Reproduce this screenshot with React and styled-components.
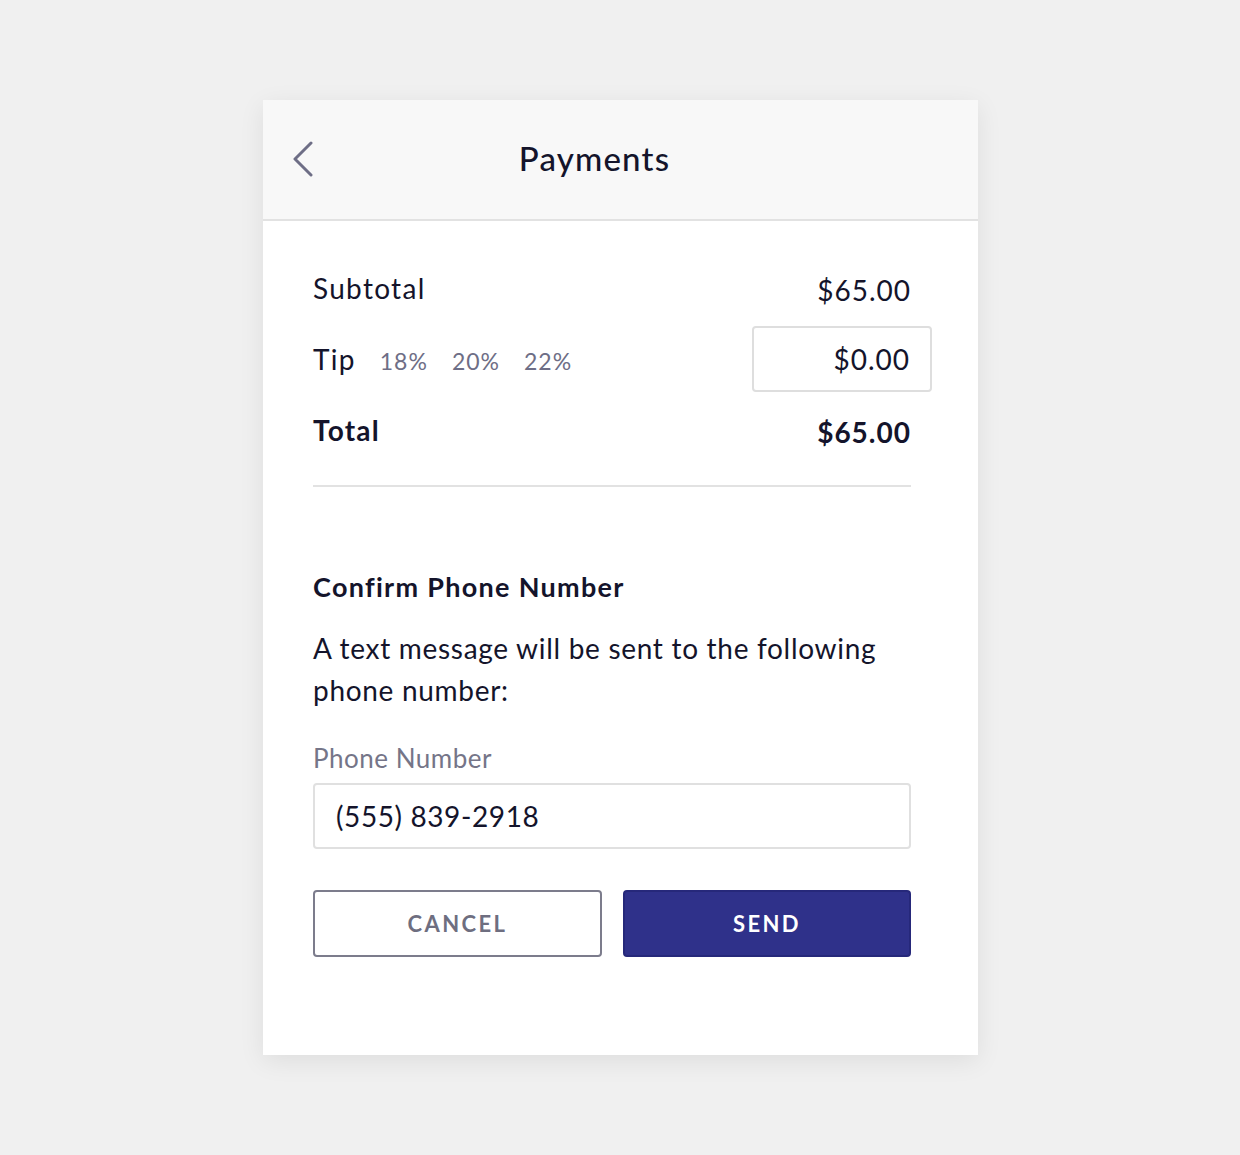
import React from "react";
import styled, { createGlobalStyle } from "styled-components";

const GlobalStyle = createGlobalStyle`
	html, body {
		margin: 0;
		padding: 0;
		background: #f0f0f0;
	}
	body {
		font-family: "Lato", "Noto Sans", sans-serif;
		color: #14142b;
	}
`;

export default function App() {
	return (
		<>
			<GlobalStyle />
			<Page>
				<Card>
					<Header>
						<BackButton aria-label="Back">
							<svg width="22" height="36" viewBox="0 0 22 36" fill="none">
								<path
									d="M19 2 L3 18 L19 34"
									stroke="#6e6e86"
									strokeWidth="3"
									strokeLinecap="round"
									strokeLinejoin="round"
								/>
							</svg>
						</BackButton>
						<Title>Payments</Title>
					</Header>
					<Body>
						<Summary>
							<Row>
								<Label>Subtotal</Label>
								<Amount>$65.00</Amount>
							</Row>
							<Row>
								<TipGroup>
									<Label>Tip</Label>
									<TipOption>18%</TipOption>
									<TipOption>20%</TipOption>
									<TipOption>22%</TipOption>
								</TipGroup>
								<TipInput>$0.00</TipInput>
							</Row>
							<Row>
								<Label bold>Total</Label>
								<Amount bold>$65.00</Amount>
							</Row>
						</Summary>
						<Divider />
						<SectionTitle>Confirm Phone Number</SectionTitle>
						<Paragraph>
							A text message will be sent to the following phone number:
						</Paragraph>
						<FieldLabel>Phone Number</FieldLabel>
						<PhoneInput>(555) 839-2918</PhoneInput>
						<Buttons>
							<CancelButton>CANCEL</CancelButton>
							<SendButton>SEND</SendButton>
						</Buttons>
					</Body>
				</Card>
			</Page>
		</>
	);
}

const Page = styled.div`
	min-height: 1155px;
	padding-top: 100px;
	padding-left: 1px;
	box-sizing: border-box;
	display: flex;
	justify-content: center;
`;

const Card = styled.div`
	width: 715px;
	height: 955px;
	background: #ffffff;
	box-shadow: 0 6px 24px rgba(0, 0, 0, 0.08);
	display: flex;
	flex-direction: column;
`;

const Header = styled.div`
	height: 119px;
	background: #f8f8f8;
	border-bottom: 2px solid #e2e2e2;
	display: flex;
	align-items: center;
	justify-content: center;
	position: relative;
`;

const BackButton = styled.button`
	position: absolute;
	left: 29px;
	top: 41px;
	background: none;
	border: none;
	padding: 0;
	display: flex;
`;

const Title = styled.h1`
	margin: 0 52px 4px 0;
	font-family: "Lato", sans-serif;
	font-weight: 500;
	font-size: 33px;
	letter-spacing: 1.2px;
	color: #14142b;
`;

const Body = styled.div`
	padding: 31px 67px 0 50px;
	display: flex;
	flex-direction: column;
`;

const Summary = styled.div`
	display: flex;
	flex-direction: column;
`;

const Row = styled.div`
	display: flex;
	align-items: center;
	justify-content: space-between;
	min-height: 71px;
`;

const TipGroup = styled.div`
	display: flex;
	align-items: center;
	gap: 24px;
`;

const Label = styled.span`
	font-size: 28px;
	font-weight: ${(p) => (p.bold ? 700 : 400)};
	letter-spacing: ${(p) => (p.bold ? "1.2px" : "1.3px")};
	color: #14142b;
`;

const Amount = styled.span`
	font-size: 28px;
	font-weight: ${(p) => (p.bold ? 700 : 400)};
	letter-spacing: 1px;
	color: #14142b;
	margin-top: 4px;
`;

const TipOption = styled.span`
	font-size: 23px;
	letter-spacing: 1px;
	color: #6e6e86;
	margin-top: 4px;
	&:first-of-type {
		margin-left: 6px;
	}
`;

const TipInput = styled.div`
	width: 180px;
	height: 66px;
	box-sizing: border-box;
	border: 2px solid #dedede;
	border-radius: 4px;
	margin-right: -21px;
	padding-right: 20px;
	display: flex;
	align-items: center;
	justify-content: flex-end;
	font-size: 28px;
	letter-spacing: 1px;
	color: #14142b;
`;

const Divider = styled.hr`
	margin: 20px 0 0 0;
	border: none;
	border-top: 2px solid #e2e2e2;
`;

const SectionTitle = styled.h2`
	margin: 83px 0 0 0;
	font-size: 27px;
	font-weight: 700;
	letter-spacing: 1.3px;
	color: #14142b;
`;

const Paragraph = styled.p`
	margin: 24px 0 0 0;
	font-size: 28px;
	line-height: 42px;
	letter-spacing: 0.7px;
	color: #14142b;
`;

const FieldLabel = styled.div`
	margin-top: 31px;
	font-size: 26px;
	letter-spacing: 0.5px;
	color: #757588;
`;

const PhoneInput = styled.div`
	margin-top: 9px;
	height: 66px;
	box-sizing: border-box;
	border: 2px solid #e0e0e0;
	border-radius: 4px;
	padding-left: 21px;
	display: flex;
	align-items: center;
	font-size: 28px;
	letter-spacing: 0.6px;
	color: #14142b;
`;

const Buttons = styled.div`
	margin-top: 41px;
	display: grid;
	grid-template-columns: 289px 288px;
	column-gap: 21px;
`;

const ButtonBase = styled.button`
	height: 67px;
	box-sizing: border-box;
	border-radius: 4px;
	font-family: "Lato", sans-serif;
	font-size: 22px;
	font-weight: 700;
	letter-spacing: 2.4px;
	cursor: pointer;
`;

const CancelButton = styled(ButtonBase)`
	background: #ffffff;
	border: 2px solid #7c7c8c;
	color: #6e6e80;
`;

const SendButton = styled(ButtonBase)`
	background: #2f318a;
	border: 2px solid #26287a;
	color: #ffffff;
`;
